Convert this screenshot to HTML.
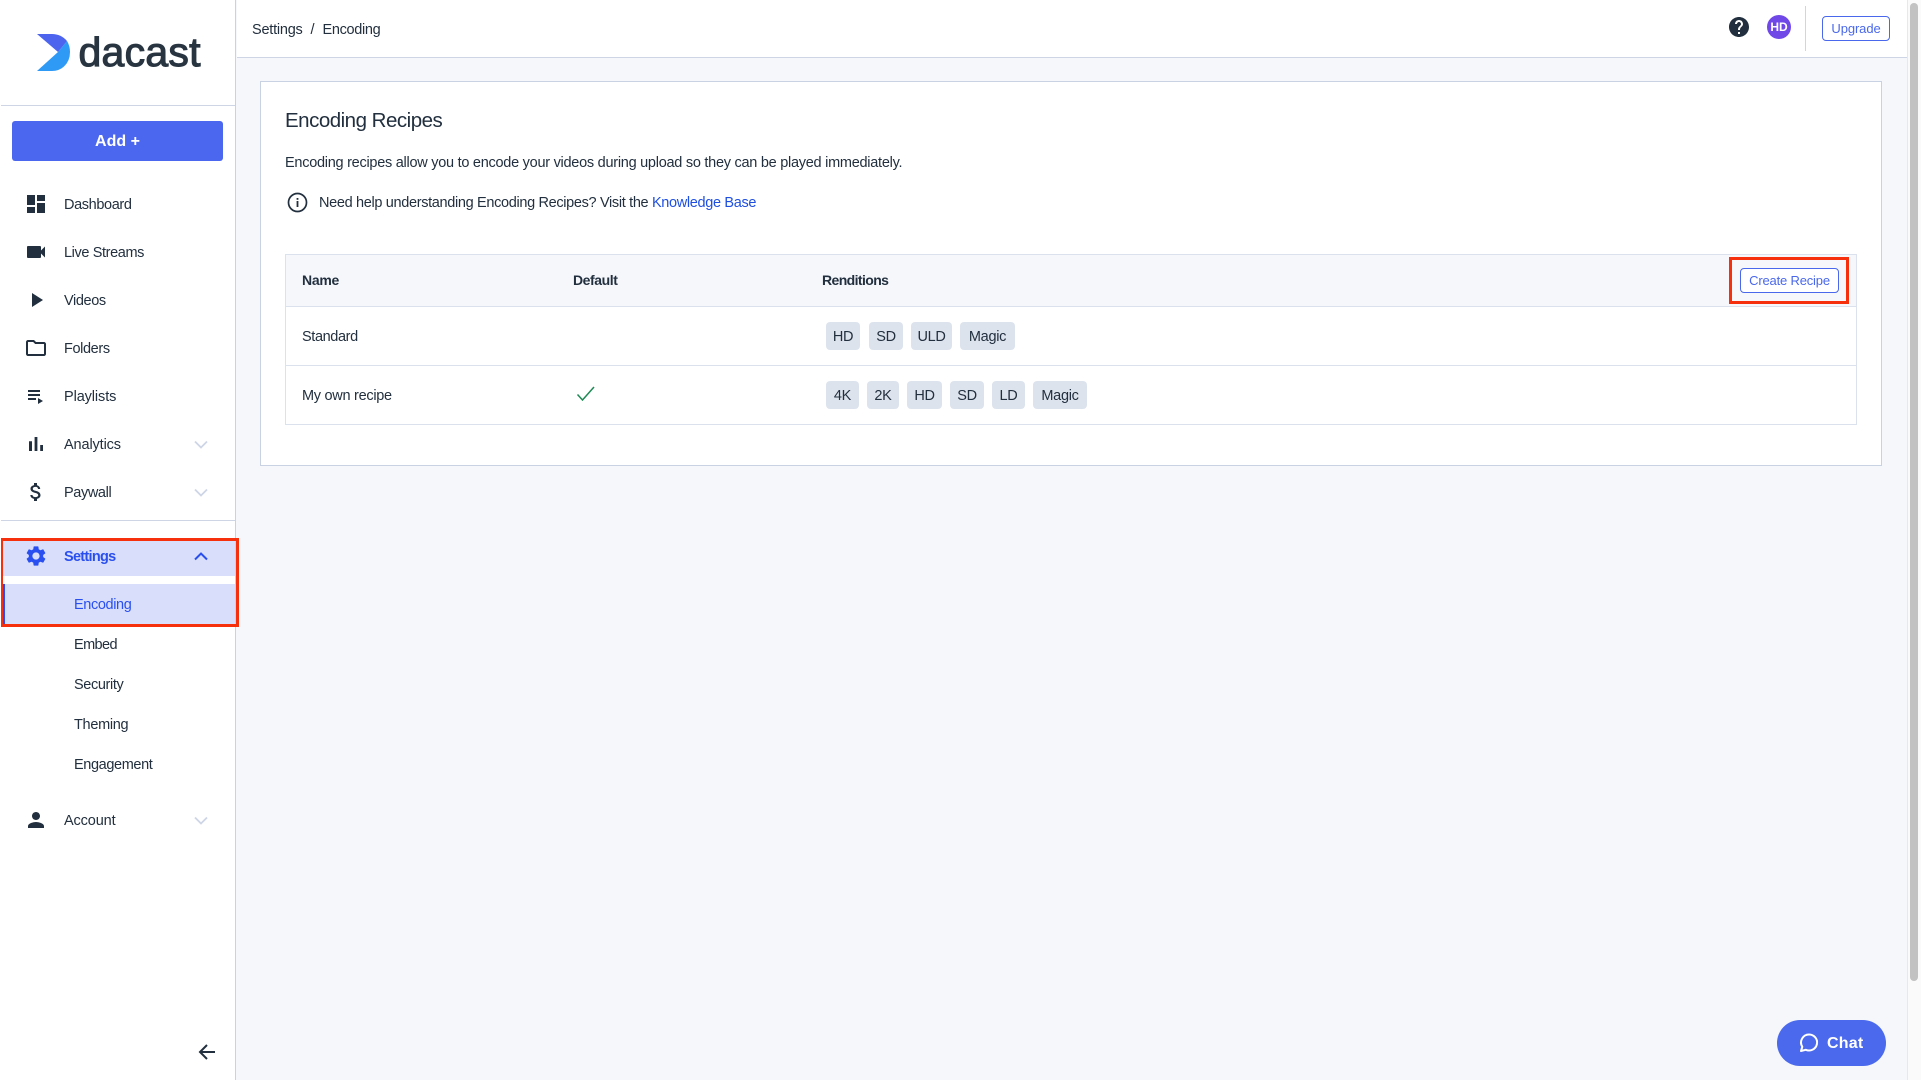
<!DOCTYPE html>
<html lang="en">
<head>
<meta charset="utf-8">
<title>Encoding Recipes</title>
<style>
html,body{margin:0;padding:0;width:1921px;height:1080px;overflow:hidden;background:#f5f7fb;}
body{position:relative;font-family:"Liberation Sans",Arial,sans-serif;color:#222f3e;font-size:14.5px;}
.a{position:absolute;}
.t{position:absolute;line-height:20px;height:20px;margin-top:1px;white-space:nowrap;letter-spacing:-.38px;}
.ic{position:absolute;width:24px;height:24px;fill:#222f3e;}
.chev{position:absolute;width:14px;height:9px;fill:none;stroke:#ced6e6;stroke-width:1.8;}
.chip{position:absolute;height:28px;background:#dde3ed;border-radius:4px;text-align:center;line-height:30px;letter-spacing:-.3px;}
.btn{position:absolute;box-sizing:border-box;border:1px solid #4a68ec;border-radius:4px;color:#4a68ec;background:#fff;text-align:center;font-size:13px;}
.red{position:absolute;box-sizing:border-box;border:3px solid #f62f0c;}
</style>
</head>
<body>

<!-- Sidebar -->
<div class="a" style="left:0;top:0;width:235px;height:1080px;background:#fff;border-right:1.5px solid #c9d2e3;"></div>
<div class="a" style="left:1px;top:105px;width:234px;height:1px;background:#ced6e6;"></div>

<svg class="a" style="left:37px;top:34px;width:33px;height:37px;" viewBox="37 34 33 37">
  <path fill="#2f9af6" d="M58 52L67 41Q70 46 70 52Q70 61 64 66.500Q59 71 52 71H37Z"/>
  <path fill="#4c64ee" d="M37 34H52Q61 34 67 41L58 52Z"/>
</svg>
<div class="a" style="left:78.500px;top:28px;line-height:48px;font-size:41px;letter-spacing:.25px;color:#283541;-webkit-text-stroke:1.1px #283541;">dacast</div>

<div class="a" style="left:12px;top:121px;width:211px;height:40px;border-radius:3px;background:#4c67ef;color:#fff;font-weight:bold;font-size:16px;line-height:42px;text-align:center;">Add +</div>

<svg class="ic" style="left:24px;top:192px" viewBox="0 0 24 24"><path d="M3 13h8V3H3v10zm0 8h8v-6H3v6zm10 0h8V11h-8v10zm0-18v6h8V3h-8z"/></svg>
<div class="t" style="left:64px;top:194px">Dashboard</div>

<svg class="ic" style="left:24px;top:240px" viewBox="0 0 24 24"><path d="M17 10.500V7c0-.55-.45-1-1-1H4c-.55 0-1 .45-1 1v10c0 .55.45 1 1 1h12c.55 0 1-.45 1-1v-3.500l4 4v-11l-4 4z"/></svg>
<div class="t" style="left:64px;top:242px">Live Streams</div>

<svg class="ic" style="left:24px;top:288px" viewBox="0 0 24 24"><path d="M8 5v14l11-7z"/></svg>
<div class="t" style="left:64px;top:290px">Videos</div>

<svg class="ic" style="left:24px;top:336px" viewBox="0 0 24 24"><path d="M20 6h-8l-2-2H4c-1.100 0-1.990.9-1.990 2L2 18c0 1.100.9 2 2 2h16c1.100 0 2-.9 2-2V8c0-1.100-.9-2-2-2zm0 12H4V6h5.170l2 2H20v10z"/></svg>
<div class="t" style="left:64px;top:338px">Folders</div>

<svg class="ic" style="left:24px;top:384px" viewBox="0 0 24 24"><path d="M4 10h12v2H4zm0-4h12v2H4zm0 8h8v2H4zm10 0v6l5-3z"/></svg>
<div class="t" style="left:64px;top:386px;letter-spacing:-.1px">Playlists</div>

<svg class="ic" style="left:24px;top:432px" viewBox="0 0 24 24"><path d="M5 9.200h3V19H5zM10.600 5h2.800v14h-2.800zm5.600 8H19v6h-2.800z"/></svg>
<div class="t" style="left:64px;top:434px;letter-spacing:-.12px">Analytics</div>
<svg class="chev" style="left:194px;top:440px" viewBox="0 0 14 9"><path d="M1 1.500l6 6 6-6"/></svg>

<svg class="ic" style="left:24px;top:480px" viewBox="0 0 24 24"><path d="M11.800 10.900c-2.270-.59-3-1.200-3-2.150 0-1.090 1.010-1.850 2.700-1.850 1.780 0 2.440.85 2.500 2.100h2.210c-.07-1.720-1.120-3.300-3.210-3.810V3h-3v2.160c-1.940.42-3.500 1.680-3.500 3.610 0 2.310 1.910 3.460 4.700 4.130 2.500.6 3 1.480 3 2.410 0 .69-.49 1.790-2.700 1.790-2.060 0-2.870-.92-2.980-2.100h-2.200c.12 2.190 1.760 3.420 3.680 3.830V21h3v-2.150c1.950-.37 3.500-1.500 3.500-3.550 0-2.840-2.430-3.810-4.700-4.400z"/></svg>
<div class="t" style="left:64px;top:482px">Paywall</div>
<svg class="chev" style="left:194px;top:488px" viewBox="0 0 14 9"><path d="M1 1.500l6 6 6-6"/></svg>

<div class="a" style="left:1px;top:520px;width:234px;height:1px;background:#ced6e6;"></div>

<div class="a" style="left:3px;top:541px;width:232px;height:35px;background:#d9dffb;"></div>
<div class="a" style="left:3px;top:584px;width:232px;height:41px;background:#d9dffb;"></div>

<svg class="ic" style="left:24px;top:544px;fill:#2a4ff0" viewBox="0 0 24 24"><path d="M19.140 12.940c.04-.3.06-.61.06-.94 0-.32-.02-.64-.07-.94l2.030-1.580c.18-.14.23-.41.12-.61l-1.920-3.320c-.12-.22-.37-.29-.59-.22l-2.390.96c-.5-.38-1.030-.7-1.620-.94l-.36-2.540c-.04-.24-.24-.41-.48-.41h-3.840c-.24 0-.43.17-.47.41l-.36 2.540c-.59.24-1.130.57-1.620.94l-2.390-.96c-.22-.08-.47 0-.59.22L2.740 8.870c-.12.21-.08.47.12.61l2.030 1.580c-.05.3-.09.63-.09.94s.02.64.07.94l-2.030 1.580c-.18.14-.23.41-.12.61l1.920 3.320c.12.22.37.29.59.22l2.390-.96c.5.38 1.030.7 1.620.94l.36 2.540c.05.24.24.41.48.41h3.840c.24 0 .44-.17.47-.41l.36-2.540c.59-.24 1.130-.56 1.620-.94l2.390.96c.22.08.47 0 .59-.22l1.920-3.320c.12-.22.07-.47-.12-.61l-2.010-1.580zM12 15.600c-1.980 0-3.600-1.620-3.600-3.600s1.620-3.600 3.600-3.600 3.600 1.620 3.600 3.600-1.620 3.600-3.600 3.600z"/></svg>
<div class="t" style="left:64px;top:546px;color:#2a4ff0;font-weight:bold;letter-spacing:-.72px">Settings</div>
<svg class="chev" style="left:194px;top:552px;stroke:#2a4ff0;stroke-width:2" viewBox="0 0 14 9"><path d="M1 7.500l6-6 6 6"/></svg>

<div class="t" style="left:74px;top:594px;color:#2a4ff0">Encoding</div>
<div class="t" style="left:74px;top:634px;letter-spacing:-.6px">Embed</div>
<div class="t" style="left:74px;top:674px">Security</div>
<div class="t" style="left:74px;top:714px;letter-spacing:-.3px">Theming</div>
<div class="t" style="left:74px;top:754px">Engagement</div>

<svg class="ic" style="left:24px;top:808px" viewBox="0 0 24 24"><path d="M12 12c2.210 0 4-1.790 4-4s-1.790-4-4-4-4 1.790-4 4 1.790 4 4 4zm0 2c-2.670 0-8 1.340-8 4v2h16v-2c0-2.660-5.330-4-8-4z"/></svg>
<div class="t" style="left:64px;top:810px;letter-spacing:-.13px">Account</div>
<svg class="chev" style="left:194px;top:816px" viewBox="0 0 14 9"><path d="M1 1.500l6 6 6-6"/></svg>

<svg class="a" style="left:198px;top:1043px;width:18px;height:18px;fill:none;stroke:#222f3e;stroke-width:2" viewBox="0 0 18 18"><path d="M17 9H2M9 2L2 9l7 7"/></svg>

<div class="red" style="left:1px;top:538px;width:238px;height:89px;border-left-width:2px;"></div>
<div class="a" style="left:3px;top:584px;width:2px;height:40px;background:#2a4ff0;"></div>

<!-- Top bar -->
<div class="a" style="left:236.500px;top:0;width:1670.500px;height:57px;background:#fff;border-bottom:1.500px solid #ced6e6;"></div>
<div class="t" style="left:252px;top:19px;letter-spacing:-.23px">Settings</div>
<div class="t" style="left:310.500px;top:19px">/</div>
<div class="t" style="left:322.500px;top:19px;letter-spacing:-.32px">Encoding</div>

<svg class="ic" style="left:1727px;top:15px" viewBox="0 0 24 24"><path d="M12 2C6.480 2 2 6.480 2 12s4.480 10 10 10 10-4.480 10-10S17.520 2 12 2zm1 17h-2v-2h2v2zm2.070-7.750l-.9.920C13.450 12.900 13 13.500 13 15h-2v-.5c0-1.100.45-2.100 1.170-2.830l1.240-1.260c.37-.36.59-.86.59-1.410 0-1.100-.9-2-2-2s-2 .9-2 2H8c0-2.210 1.790-4 4-4s4 1.790 4 4c0 .88-.36 1.680-.93 2.250z"/></svg>
<div class="a" style="left:1767px;top:15px;width:24px;height:24px;border-radius:50%;background:#7048e8;color:#fff;font-weight:bold;font-size:12px;line-height:24px;text-align:center;">HD</div>
<div class="a" style="left:1805px;top:6px;width:1px;height:45px;background:#ced6e6;"></div>
<div class="btn" style="left:1822px;top:16px;width:68px;height:25px;line-height:23px;letter-spacing:-.1px">Upgrade</div>

<!-- Card -->
<div class="a" style="left:260px;top:81px;width:1620px;height:383px;background:#fff;border:1px solid #c9d2e3;"></div>
<div class="t" style="left:285px;top:110px;font-size:20.500px;letter-spacing:-.5px;line-height:20px">Encoding Recipes</div>
<div class="t" style="left:285px;top:152px;letter-spacing:-.265px">Encoding recipes allow you to encode your videos during upload so they can be played immediately.</div>

<svg class="a" style="left:286.500px;top:191.500px;width:21px;height:21px;" viewBox="0 0 21 21"><circle cx="10.500" cy="10.500" r="9" fill="none" stroke="#222f3e" stroke-width="1.700"/><rect x="9.600" y="9" width="1.800" height="6" fill="#222f3e"/><rect x="9.600" y="6" width="1.800" height="1.800" fill="#222f3e"/></svg>
<div class="t" style="left:319px;top:192px;letter-spacing:-.335px">Need help understanding Encoding Recipes? Visit the <span style="color:#1f4fe0">Knowledge Base</span></div>

<!-- Table -->
<div class="a" style="left:285px;top:254px;width:1570px;height:51px;background:#f5f7fb;border:1px solid #dbe2ee;border-bottom:0;"></div>
<div class="a" style="left:285px;top:306px;width:1570px;height:116.500px;background:#fff;border:1px solid #dbe2ee;"></div>
<div class="a" style="left:285px;top:365px;width:1571px;height:1px;background:#dbe2ee;"></div>

<div class="t" style="left:302px;top:270px;margin-top:0;font-size:14px;font-weight:bold;letter-spacing:-.28px">Name</div>
<div class="t" style="left:573px;top:270px;margin-top:0;font-size:14px;font-weight:bold;letter-spacing:-.43px">Default</div>
<div class="t" style="left:822px;top:270px;margin-top:0;font-size:14px;font-weight:bold;letter-spacing:-.6px">Renditions</div>

<div class="red" style="left:1729px;top:257px;width:120px;height:47px;"></div>
<div class="btn" style="left:1740px;top:268px;width:99px;height:25px;line-height:23px;letter-spacing:-.18px">Create Recipe</div>

<div class="t" style="left:302px;top:326px">Standard</div>
<div class="chip" style="left:826px;top:322px;width:34px">HD</div>
<div class="chip" style="left:869px;top:322px;width:34px">SD</div>
<div class="chip" style="left:911px;top:322px;width:41px">ULD</div>
<div class="chip" style="left:960px;top:322px;width:55px">Magic</div>

<div class="t" style="left:302px;top:385px;letter-spacing:-.28px">My own recipe</div>
<svg class="a" style="left:575.500px;top:385px;width:20px;height:17px;" viewBox="0 0 20 17"><path d="M1.500 9.500l5 5.500L18 2" fill="none" stroke="#1e8a55" stroke-width="1.500"/></svg>
<div class="chip" style="left:826px;top:381px;width:33px">4K</div>
<div class="chip" style="left:867px;top:381px;width:32px">2K</div>
<div class="chip" style="left:907px;top:381px;width:35px">HD</div>
<div class="chip" style="left:950px;top:381px;width:34px">SD</div>
<div class="chip" style="left:992px;top:381px;width:33px">LD</div>
<div class="chip" style="left:1033px;top:381px;width:54px">Magic</div>

<!-- Chat -->
<div class="a" style="left:1777px;top:1020px;width:109px;height:46px;border-radius:23px;background:#4a69ec;"></div>
<svg class="a" style="left:1798px;top:1032px;width:22px;height:22px;" viewBox="0 0 22 22"><path d="M11 2.500a8 8 0 1 1-3.200 15.300L3 19l1.300-4.200A8 8 0 0 1 11 2.500z" fill="none" stroke="#fff" stroke-width="2" stroke-linejoin="round"/></svg>
<div class="t" style="left:1827px;top:1033px;font-size:16px;font-weight:bold;color:#fff;letter-spacing:.2px">Chat</div>

<!-- Scrollbar -->
<div class="a" style="left:1907px;top:0;width:13px;height:1080px;background:#fafafa;border-left:1px solid #e8e8e8;"></div>
<div class="a" style="left:1910px;top:3px;width:8px;height:978px;border-radius:4px;background:#c2c2c2;"></div>

</body>
</html>
